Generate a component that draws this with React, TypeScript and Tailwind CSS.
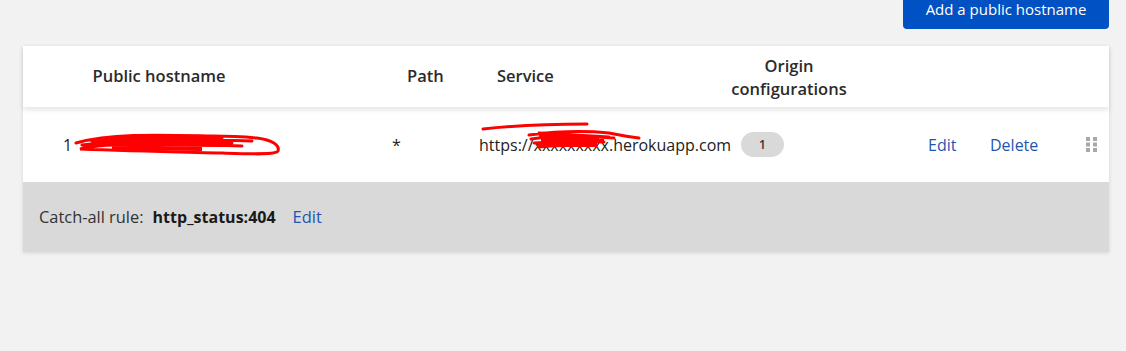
import React from "react";

function Dots() {
  return (
    <svg width="11" height="15" viewBox="0 0 11 15" className="block">
      {[0, 1, 2].map((r) =>
        [0, 1].map((c) => (
          <rect key={`${r}-${c}`} x={c * 7} y={r * 5.5} width="4" height="4" fill="#a8a8a8" />
        ))
      )}
    </svg>
  );
}

function ScribbleHost() {
  return (
    <svg width="220" height="32" viewBox="0 0 220 32" className="pointer-events-none absolute left-[49px] top-[-6px]">
      <path
        d="M4 16 C40 6 90 8 140 9 C160 9 175 10 185 11 C200 13 208 18 206 24 C204 28 180 27 150 26 C110 25 60 24 8 22 C40 15 90 14 160 16 M10 18 C60 12 120 12 180 14 M12 20 C50 16 100 17 170 19 M20 14 C60 10 110 9 150 11"
        stroke="#ff0000"
        strokeWidth="3"
        fill="none"
        strokeLinecap="round"
      />
      <path d="M30 12 L140 12 M30 17 L160 18 M40 21 L130 22" stroke="#ff0000" strokeWidth="4" fill="none" />
    </svg>
  );
}

function ScribbleService() {
  return (
    <svg width="200" height="32" viewBox="0 0 200 32" className="pointer-events-none absolute left-[0px] top-[-12px]">
      <path
        d="M4 8 C40 4 80 3 108 3 M50 14 C80 10 110 10 130 12 C140 14 150 16 160 17 M52 18 C80 14 110 15 135 17 M55 22 C80 20 100 20 125 21 M60 26 C80 24 100 24 115 24 M60 12 L130 16"
        stroke="#ff0000"
        strokeWidth="3"
        fill="none"
        strokeLinecap="round"
      />
      <path d="M60 16 L120 16 M62 20 L125 20 M58 24 L118 24" stroke="#ff0000" strokeWidth="4" fill="none" />
    </svg>
  );
}

export default function App() {
  return (
    <div
      className="min-h-[351px] w-full bg-[#f2f2f2] pl-[23px] pr-[17px] text-[#2b2b2b]"
      style={{ fontFamily: '"Open Sans", "Noto Sans", sans-serif' }}
    >
      <div className="flex justify-end">
        <button className="mt-[-11px] flex h-[40px] w-[206px] items-center justify-center rounded-[4px] bg-[#0051c3] text-[15px] text-white">
          Add a public hostname
        </button>
      </div>

      <div className="mt-[17px] bg-white shadow-[0_1px_4px_rgba(0,0,0,0.12)]">
        <div className="relative z-10 flex h-[61px] items-center bg-white text-[16.5px] font-semibold text-[#2b2b2b] shadow-[0_3px_5px_rgba(0,0,0,0.1)]">
          <div className="w-[272px] text-center">Public hostname</div>
          <div className="w-[202px] pl-[112px]">Path</div>
          <div className="w-[222px]">Service</div>
          <div className="w-[140px] text-center leading-[23px]">
            Origin
            <br />
            configurations
          </div>
        </div>

        <div className="flex h-[75px] items-center bg-white text-[16px] text-[#222]">
          <div className="relative w-[369px] pl-[40px]">
            1
            <ScribbleHost />
          </div>
          <div className="w-[87px]">*</div>
          <div className="relative w-[262px] whitespace-nowrap">
            https://xxxxxxxxx.herokuapp.com
            <ScribbleService />
          </div>
          <div className="flex h-[25px] w-[43px] items-center justify-center rounded-full bg-[#d9d9d9] text-[12px] font-semibold text-[#333]">
            1
          </div>
          <div className="w-[144px]"></div>
          <div className="w-[62px] text-[#1f55b0]">Edit</div>
          <div className="w-[96px] text-[#1f55b0]">Delete</div>
          <Dots />
        </div>

        <div className="flex h-[70px] items-center bg-[#d9d9d9] pl-[16px]">
          <span className="text-[16.4px] text-[#333]">Catch-all rule:</span>
          <span className="ml-[9px] text-[16px] font-bold text-[#1a1a1a]">http_status:404</span>
          <span className="ml-[17px] text-[16.5px] text-[#1f55b0]">Edit</span>
        </div>
      </div>
    </div>
  );
}
